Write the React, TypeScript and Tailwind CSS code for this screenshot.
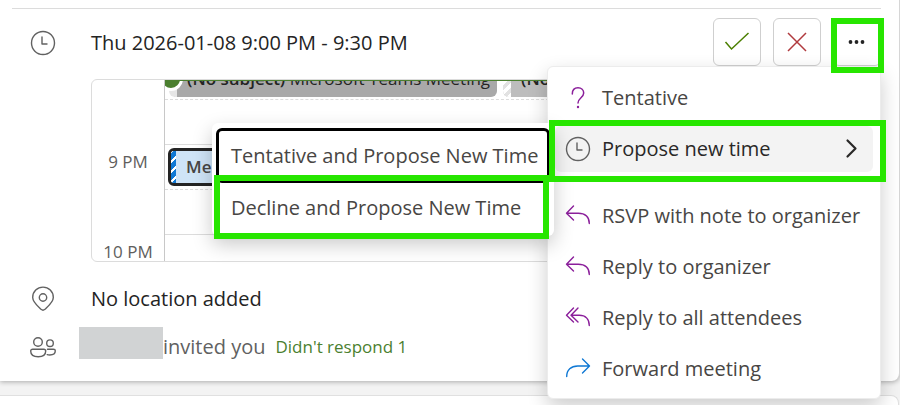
import type { ReactNode } from "react";

type IconProps = { className?: string };

function ClockIcon({ className = "" }: IconProps) {
  return (
    <svg viewBox="0 0 26 26" className={`h-[26px] w-[26px] shrink-0 ${className}`} fill="none" stroke="currentColor" strokeWidth="1.4">
      <circle cx="13" cy="13" r="11.5" />
      <path d="M12 7v7h5" strokeLinecap="round" strokeLinejoin="round" />
    </svg>
  );
}

function PinIcon() {
  return (
    <svg viewBox="0 0 26 26" className="h-[26px] w-[26px] shrink-0" fill="none" stroke="currentColor" strokeWidth="1.4">
      <path d="M13 24.2c-.8 0-1.3-.4-1.900-.9C7.200 19.600 2.700 15.900 2.700 11.400a10.300 10.300 0 0 1 20.600 0c0 4.500-4.500 8.200-8.400 11.900-.6.500-1.100.9-1.900.9Z" />
      <circle cx="13" cy="11.500" r="3.700" />
    </svg>
  );
}

function PeopleIcon() {
  return (
    <svg viewBox="0 0 26 26" className="h-[26px] w-[26px] shrink-0" fill="none" stroke="currentColor" strokeWidth="1.4">
      <circle cx="8" cy="8" r="4.300" />
      <circle cx="20" cy="9.200" r="3.300" />
      <path d="M2.600 15.200h11.200c1.100 0 1.900.8 1.900 1.800 0 3.600-2.800 5.800-7.500 5.800S.7 20.600.7 17c0-1 .8-1.800 1.900-1.800Z" />
      <path d="M17.500 15.200h6c1 0 1.800.8 1.800 1.600 0 2.600-2.300 4.200-5.500 4.200-1 0-1.800-.1-2.600-.4" strokeLinecap="round" />
    </svg>
  );
}

function QuestionIcon() {
  return (
    <svg viewBox="0 0 26 26" className="h-[26px] w-[26px] shrink-0 text-[#8b1f9b]" fill="none" stroke="currentColor" strokeWidth="1.5">
      <path d="M7.300 9C7.300 5.100 9.600 2.700 13 2.700s5.700 2.300 5.700 5.400c0 4.400-5.700 5-5.700 9.900" strokeLinecap="round" />
      <circle cx="13" cy="22" r="1.200" fill="currentColor" stroke="none" />
    </svg>
  );
}

function ReplyIcon() {
  return (
    <svg viewBox="0 0 26 26" className="h-[26px] w-[26px] shrink-0 text-[#8b1f9b]" fill="none" stroke="currentColor" strokeWidth="1.4" strokeLinecap="round" strokeLinejoin="round">
      <path d="M8.500 3 1.500 10.200l7 6.800M1.500 10.200h11.800c6.700 0 11 3.700 11 10.300" />
    </svg>
  );
}

function ReplyAllIcon() {
  return (
    <svg viewBox="0 0 26 26" className="h-[26px] w-[26px] shrink-0 text-[#8b1f9b]" fill="none" stroke="currentColor" strokeWidth="1.4" strokeLinecap="round" strokeLinejoin="round">
      <path d="M8.500 3 1.500 10.200l7 6.800M13 3 6 10.200l7 6.800M6 10.200h8.300c6 0 10 3.700 10 10.300" />
    </svg>
  );
}

function ForwardIcon() {
  return (
    <svg viewBox="0 0 26 26" className="h-[26px] w-[26px] shrink-0 text-[#0f78d4]" fill="none" stroke="currentColor" strokeWidth="1.4" strokeLinecap="round" strokeLinejoin="round">
      <path d="m17.500 3 7 7-7 7M24.500 10H12.700c-6.700 0-11 3.900-11 10.500" />
    </svg>
  );
}

function Highlight({ className }: { className: string }) {
  return <span aria-hidden="true" className={`pointer-events-none absolute z-30 border-6 border-[#27e600] ${className}`} />;
}

function ActionButton({ label, children }: { label: string; children: ReactNode }) {
  return (
    <button type="button" aria-label={label} className="flex size-12 items-center justify-center rounded-md border border-[#cfcfcf] bg-white">
      {children}
    </button>
  );
}

function MenuItem({ icon, children }: { icon: ReactNode; children: ReactNode }) {
  return (
    <button type="button" role="menuitem" className="flex h-[46px] w-full items-center gap-[11px] rounded-md px-2.5 text-left whitespace-nowrap">
      {icon}
      {children}
    </button>
  );
}

function Submenu() {
  return (
    <div role="menu" className="absolute top-[-3px] right-[319px] z-20 w-[342px] rounded-md bg-white p-1 pt-[5px] shadow-[0_8px_20px_rgba(0,0,0,0.22)]">
      <button type="button" role="menuitem" className="flex h-[55px] w-[334px] items-center rounded-md border-3 border-black px-3 text-left whitespace-nowrap">
        Tentative and Propose New Time
      </button>
      <button type="button" role="menuitem" className="flex h-[49px] w-full items-center px-[15px] text-left whitespace-nowrap">
        Decline and Propose New Time
      </button>
      <Highlight className="top-[52px] left-0.5 h-16 w-[335px]" />
    </div>
  );
}

function MoreMenu() {
  return (
    <div role="menu" className="absolute top-12 right-0 z-10 flex w-[334px] flex-col gap-[5px] rounded-md border border-[#ececec] bg-white px-[7px] pt-2 pb-1.5 text-[#484644] shadow-[0_8px_20px_rgba(0,0,0,0.20)]">
      <MenuItem icon={<QuestionIcon />}>Tentative</MenuItem>
      <div className="relative mb-4">
        <button type="button" role="menuitem" aria-haspopup="menu" aria-expanded="true" className="flex h-[46px] w-full items-center gap-[11px] rounded-md bg-[#f3f3f3] px-2.5 text-left whitespace-nowrap text-[#292827]">
          <ClockIcon className="text-[#616161]" />
          <span className="flex-1">Propose new time</span>
          <svg viewBox="0 0 26 26" className="h-[26px] w-[26px]" fill="none" stroke="currentColor" strokeWidth="2.2" strokeLinecap="round" strokeLinejoin="round">
            <path d="m10.500 4.500 8 8-8 8" />
          </svg>
        </button>
        <Highlight className="top-[-6px] left-[-6px] h-[62px] w-[337px]" />
        <Submenu />
      </div>
      <MenuItem icon={<ReplyIcon />}>RSVP with note to organizer</MenuItem>
      <MenuItem icon={<ReplyIcon />}>Reply to organizer</MenuItem>
      <MenuItem icon={<ReplyAllIcon />}>Reply to all attendees</MenuItem>
      <MenuItem icon={<ForwardIcon />}>Forward meeting</MenuItem>
    </div>
  );
}

function DayPreview() {
  return (
    <div className="mr-[18px] ml-[91px] flex h-[183px] overflow-hidden rounded-md border border-[#dcdcdc] text-[17px] leading-6">
      <div className="w-[73px] shrink-0 border-r border-[#c8c8c8] pt-[70px] text-center text-[#605e5c]">
        <div className="h-[90px]">9 PM</div>
        <div>10 PM</div>
      </div>
      <div className="relative min-w-0 flex-1 overflow-hidden border-t border-[#4b7f2f]">
        <div className="h-[19px] border-b border-dashed border-[#dcdcdc]" />
        <div className="h-[45px] border-b border-[#dcdcdc]" />
        <div className="h-[45px] border-b border-dashed border-[#dcdcdc]" />
        <div className="h-[45px] border-b border-[#dcdcdc]" />

        <div className="absolute top-0 left-1 h-4 w-[328px] overflow-hidden rounded-b-md border-l-8 border-[#e6e6e6] bg-[#a9a9a9] text-[#242424]">
          <p className="-mt-3.5 pl-2.5 whitespace-nowrap">
            <b className="font-semibold">(No subject)</b> Microsoft Teams Meeting
          </p>
        </div>
        <div className="absolute top-0 left-[338px] flex h-4 w-[328px] overflow-hidden rounded-b-md bg-[#bdbdbd] text-[#242424]">
          <span className="w-2 shrink-0 bg-[repeating-linear-gradient(135deg,#ffffff_0_3px,#e2e2e2_3px_7px)]" />
          <p className="-mt-3.5 pl-2.5 whitespace-nowrap">
            <b className="font-semibold">(No subject)</b>
          </p>
        </div>
        <span className="absolute top-[-14px] left-[-6px] size-6 rounded-full border-3 border-white bg-[#4b7f2f]" />
        <div className="absolute top-[67px] left-[3px] flex h-[38px] w-80 overflow-hidden rounded-md border-3 border-[#242424] bg-[#cfe4f7] font-semibold text-[#484644]">
          <span className="w-[5px] shrink-0 bg-[repeating-linear-gradient(135deg,#ffffff_0_2px,#0f78d4_2px_7px)]" />
          <span className="pt-1 pl-2.5">Me</span>
        </div>
      </div>
    </div>
  );
}

export default function App() {
  return (
    <main className="flex min-h-screen flex-col gap-3.5 overflow-hidden bg-[#f3f3f3] font-['Open_Sans','Noto_Sans',sans-serif] text-[20px] leading-7 text-[#242424]">
      <section className="rounded-br-lg border-r border-[#d6d6d6] bg-white pb-5 shadow-[0_1px_5px_rgba(0,0,0,0.3)]">
        <div className="mr-[18px] ml-3 h-[9px] border-b border-[#dcdcdc]" />
        <div className="mt-[9px] mr-[18px] flex h-[61px] items-start">
          <div className="flex h-[50px] flex-1 items-center gap-[35px] pl-[30px]">
            <ClockIcon className="text-[#616161]" />
            <h1 className="whitespace-nowrap">Thu 2026-01-08 9:00 PM - 9:30 PM</h1>
          </div>
          <div className="relative flex gap-3">
            <ActionButton label="Accept">
              <svg viewBox="0 0 26 26" className="size-[26px] text-[#4b7f00]" fill="none" stroke="currentColor" strokeWidth="1.5">
                <path d="m1.500 13 6 7L24.500 4" />
              </svg>
            </ActionButton>
            <ActionButton label="Decline">
              <svg viewBox="0 0 26 26" className="size-[26px] text-[#b03a3e]" fill="none" stroke="currentColor" strokeWidth="1.5">
                <path d="m4 4 18 18M22 4 4 22" />
              </svg>
            </ActionButton>
            <ActionButton label="More options">
              <svg viewBox="0 0 26 26" className="size-[26px]" fill="currentColor">
                <circle cx="6.500" cy="13" r="1.900" />
                <circle cx="12.500" cy="13" r="1.900" />
                <circle cx="18.500" cy="13" r="1.900" />
              </svg>
            </ActionButton>
            <Highlight className="top-0 right-[-3px] h-[55px] w-[53px]" />
            <MoreMenu />
          </div>
        </div>
        <DayPreview />
        <div className="mt-[23px] flex items-center gap-[35px] pl-[30px] text-[#616161]">
          <PinIcon />
          <p className="text-[#242424]">No location added</p>
        </div>
        <div className="mt-5 flex items-center pl-[30px] text-[#616161]">
          <PeopleIcon />
          <span className="-mt-2 ml-[23px] h-8 w-[84px] bg-[#d1d3d4]" />
          <span>invited you</span>
          <span className="ml-2.5 text-[17px] text-[#4b7f2f]">Didn't respond 1</span>
        </div>
      </section>
      <section className="mr-px flex-1 rounded-tr-lg border-t border-r border-[#e0e0e0] bg-white" />
    </main>
  );
}
